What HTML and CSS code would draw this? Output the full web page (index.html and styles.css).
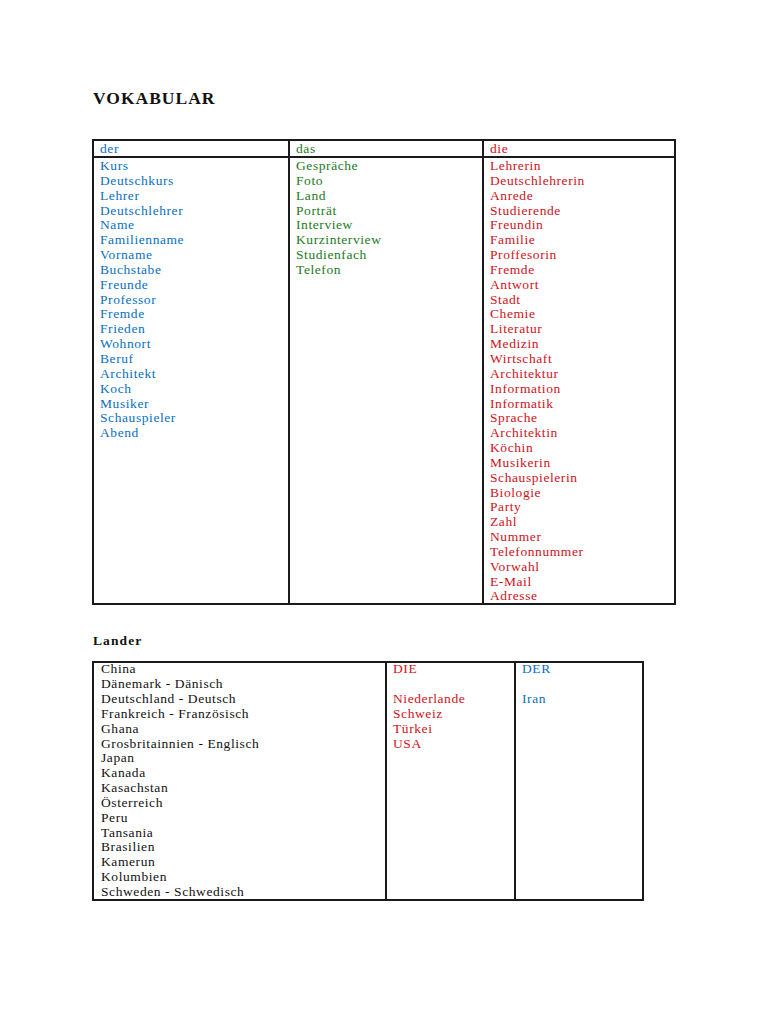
FILE: index.html
```html
<!DOCTYPE html>
<html lang="de">
<head>
<meta charset="utf-8">
<title>Vokabular</title>
<link rel="stylesheet" href="styles.css">
</head>
<body>
<main class="page">
  <h1 class="title">VOKABULAR</h1>

  <section class="vocab">
    <div class="cell head c1 blue">der</div>
    <div class="cell head c2 green">das</div>
    <div class="cell head c3 red">die</div>
    <div class="cell body c1 blue">
      <div>Kurs</div><div>Deutschkurs</div><div>Lehrer</div><div>Deutschlehrer</div><div>Name</div><div>Familienname</div><div>Vorname</div><div>Buchstabe</div><div>Freunde</div><div>Professor</div><div>Fremde</div><div>Frieden</div><div>Wohnort</div><div>Beruf</div><div>Architekt</div><div>Koch</div><div>Musiker</div><div>Schauspieler</div><div>Abend</div>
    </div>
    <div class="cell body c2 green">
      <div>Gespräche</div><div>Foto</div><div>Land</div><div>Porträt</div><div>Interview</div><div>Kurzinterview</div><div>Studienfach</div><div>Telefon</div>
    </div>
    <div class="cell body c3 red">
      <div>Lehrerin</div><div>Deutschlehrerin</div><div>Anrede</div><div>Studierende</div><div>Freundin</div><div>Familie</div><div>Proffesorin</div><div>Fremde</div><div>Antwort</div><div>Stadt</div><div>Chemie</div><div>Literatur</div><div>Medizin</div><div>Wirtschaft</div><div>Architektur</div><div>Information</div><div>Informatik</div><div>Sprache</div><div>Architektin</div><div>Köchin</div><div>Musikerin</div><div>Schauspielerin</div><div>Biologie</div><div>Party</div><div>Zahl</div><div>Nummer</div><div>Telefonnummer</div><div>Vorwahl</div><div>E-Mail</div><div>Adresse</div>
    </div>
  </section>

  <h2 class="subtitle">Lander</h2>

  <section class="countries">
    <div class="cell k1">
      <div>China</div><div>Dänemark - Dänisch</div><div>Deutschland - Deutsch</div><div>Frankreich - Französisch</div><div>Ghana</div><div>Grosbritainnien - Englisch</div><div>Japan</div><div>Kanada</div><div>Kasachstan</div><div>Österreich</div><div>Peru</div><div>Tansania</div><div>Brasilien</div><div>Kamerun</div><div>Kolumbien</div><div>Schweden - Schwedisch</div>
    </div>
    <div class="cell k2 red">
      <div>DIE</div><div class="blank">&nbsp;</div><div>Niederlande</div><div>Schweiz</div><div>Türkei</div><div>USA</div>
    </div>
    <div class="cell k3 blue">
      <div>DER</div><div class="blank">&nbsp;</div><div>Iran</div>
    </div>
  </section>
</main>
</body>
</html>
```

FILE: styles.css
```css
html, body {
  margin: 0;
  padding: 0;
  background: #ffffff;
}

.page {
  padding: 87px 0 0 92px;
  font-family: "Liberation Serif", "Times New Roman", serif;
  color: #111;
  font-size: 13.5px;
  letter-spacing: 0.58px;
  line-height: 14.85px;
}

.title {
  margin: 0;
  font-size: 17.5px;
  letter-spacing: 1px;
  line-height: 22px;
  font-weight: bold;
  padding-left: 1px;
}

.subtitle {
  margin: 28px 0 12px;
  font-size: 13.5px;
  letter-spacing: 1.1px;
  line-height: 16px;
  font-weight: bold;
  padding-left: 1px;
}

.blue { color: #0a6fc2; }
.green { color: #237a23; }
.red { color: #d0121b; }

.vocab {
  margin-top: 30px;
  width: 584px;
  box-sizing: border-box;
  border: 2px solid #1a1a1a;
  display: grid;
  grid-template-columns: 196px 194px 190px;
}

.vocab .cell {
  padding-left: 6px;
}

.vocab .head {
  border-bottom: 2px solid #1a1a1a;
  line-height: 15px;
}

.vocab .body {
  padding-top: 1px;
  margin-bottom: -1px;
}

.vocab .c1,
.vocab .c2 {
  border-right: 2px solid #1a1a1a;
}

.countries {
  width: 552px;
  box-sizing: border-box;
  border: 2px solid #1a1a1a;
  display: grid;
  grid-template-columns: 293px 129px 126px;
}

.countries .cell {
  padding-left: 6px;
  margin-top: -1px;
  margin-bottom: -1px;
}

.countries .k1 {
  padding-left: 7px;
}

.countries .k1,
.countries .k2 {
  border-right: 2px solid #1a1a1a;
}
```
